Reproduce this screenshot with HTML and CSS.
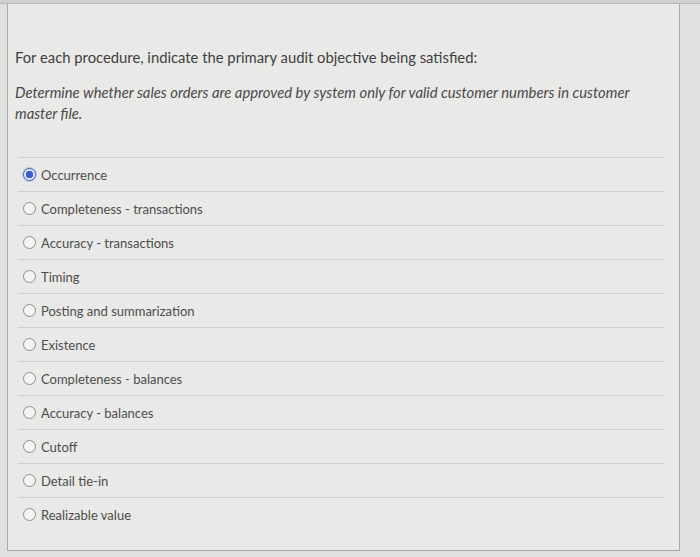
FILE: index.html
```html
<!DOCTYPE html>
<html>
<head>
<meta charset="utf-8">
<link rel="stylesheet" href="styles.css">
</head>
<body>
<div class="topstrip"></div>
<div class="card">
  <p class="question">For each procedure, indicate the primary audit objective being satisfied:</p>
  <p class="procedure">Determine whether sales orders are approved by system only for valid customer numbers in customer master file.</p>
  <ul class="options">
    <li class="opt"><span class="radio checked"></span><span class="label">Occurrence</span></li>
    <li class="opt"><span class="radio"></span><span class="label">Completeness - transactions</span></li>
    <li class="opt"><span class="radio"></span><span class="label">Accuracy - transactions</span></li>
    <li class="opt"><span class="radio"></span><span class="label">Timing</span></li>
    <li class="opt"><span class="radio"></span><span class="label">Posting and summarization</span></li>
    <li class="opt"><span class="radio"></span><span class="label">Existence</span></li>
    <li class="opt"><span class="radio"></span><span class="label">Completeness - balances</span></li>
    <li class="opt"><span class="radio"></span><span class="label">Accuracy - balances</span></li>
    <li class="opt"><span class="radio"></span><span class="label">Cutoff</span></li>
    <li class="opt"><span class="radio"></span><span class="label">Detail tie-in</span></li>
    <li class="opt last"><span class="radio"></span><span class="label">Realizable value</span></li>
  </ul>
</div>
</body>
</html>
```

FILE: styles.css
```css
html, body {
  margin: 0;
  padding: 0;
}
body {
  width: 700px;
  height: 557px;
  overflow: hidden;
  background: #e0e0de;
  font-family: Lato, "Open Sans", "Liberation Sans", sans-serif;
  color: #474747;
}
.topstrip {
  height: 3px;
  background: #d0d0ce;
  border-bottom: 1px solid #b8b8b6;
}
.card {
  margin: 0 20px 0 7px;
  height: 547px;
  box-sizing: border-box;
  background: #e9e9e7;
  border: 1px solid #a9a9a7;
  border-top: none;
  padding: 42px 0 0 7px;
}
.question {
  margin: 0;
  font-size: 14.8px;
  line-height: 22px;
  color: #3f3f3f;
}
.procedure {
  margin: 14px 30px 0 0;
  font-size: 14.8px;
  line-height: 21px;
  font-style: italic;
  color: #4a4a4a;
}
.options {
  list-style: none;
  margin: 33px 14px 0 3px;
  padding: 0;
  border-top: 1px solid #d0d0ce;
}
.opt {
  display: flex;
  align-items: center;
  gap: 5px;
  height: 33px;
  border-bottom: 1px solid #d0d0ce;
  padding-left: 5px;
  font-size: 13px;
  color: #4d4d4d;
}
.opt.last {
  border-bottom: none;
}
.radio {
  width: 11px;
  height: 11px;
  border: 1px solid #8c8c8c;
  border-radius: 50%;
  background: #f4f4f3;
  box-sizing: content-box;
  flex: none;
}
.radio.checked {
  border-color: #3d5fb8;
  background: radial-gradient(circle, #3b5fc6 0 3.5px, #e8ecf6 4px);
  box-shadow: 0 0 0 1px #b7c5e6;
}
```
